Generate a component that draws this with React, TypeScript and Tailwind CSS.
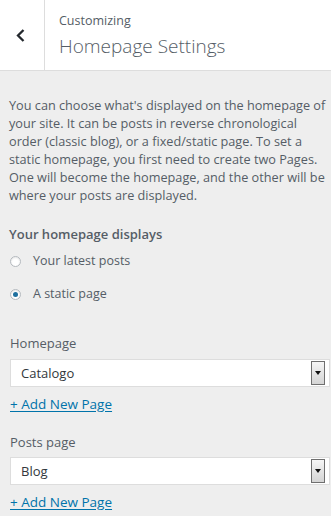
import React from 'react';

const font = { fontFamily: '"Open Sans", "Noto Sans", sans-serif' };

function ChevronLeft() {
  return (
    <svg width="9" height="13" viewBox="0 0 9 13" fill="none">
      <path d="M7.5 1 L2 6.5 L7.5 12" stroke="#23282d" strokeWidth="2.3" />
    </svg>
  );
}

function Radio({ checked, label }: { checked?: boolean; label: string }) {
  return (
    <label className="flex items-center h-[33px] text-[12.5px] text-[#555d66]">
      <span className="ml-[1px] w-[11px] h-[11px] rounded-full border border-[#b4b9be] bg-white flex items-center justify-center shadow-[inset_0_1px_2px_rgba(0,0,0,0.1)]">
        {checked && <span className="w-[5px] h-[5px] rounded-full bg-[#1e6f9e]" />}
      </span>
      <span className="ml-[12px]">{label}</span>
    </label>
  );
}

function Select({ value }: { value: string }) {
  return (
    <div className="flex h-[28px] bg-white border border-[#ddd]">
      <span className="flex-1 pl-[10px] text-[13px] leading-[26px] text-[#32373c]">{value}</span>
      <span className="w-[14px] my-[1px] mr-[4px] border border-[#6f6f6f] bg-gradient-to-b from-[#f6f6f6] to-[#d4d4d4] flex items-center justify-center">
        <svg width="6" height="4" viewBox="0 0 6 4">
          <path d="M0 0 H6 L3 4 Z" fill="#111" />
        </svg>
      </span>
    </div>
  );
}

function AddLink() {
  return (
    <a href="#" className="block mt-[7px] text-[13.5px] text-[#0073aa] underline underline-offset-2 leading-[20px]">
      + Add New Page
    </a>
  );
}

export default function App() {
  return (
    <div className="w-[331px] h-[516px] bg-[#eeeeee] overflow-hidden" style={font}>
      <div className="flex h-[71px] bg-white border-b border-[#ddd]">
        <div className="w-[45px] border-r border-[#ddd] flex items-center justify-center pr-[4px]">
          <ChevronLeft />
        </div>
        <div className="pl-[14px] pt-[12px] text-[#555d66]">
          <div className="text-[12.5px] leading-[18px]">Customizing</div>
          <div className="text-[19px] leading-[28px] mt-[2px] font-light">Homepage Settings</div>
        </div>
      </div>
      <div className="pl-[9px] pr-[1px] pt-[25px]">
        <p className="text-[12.7px] leading-[18px] text-[#555d66] whitespace-nowrap">
          You can choose what's displayed on the homepage of
          <br />
          your site. It can be posts in reverse chronological
          <br />
          order (classic blog), or a fixed/static page. To set a
          <br />
          static homepage, you first need to create two Pages.
          <br />
          One will become the homepage, and the other will be
          <br />
          where your posts are displayed.
        </p>
        <div className="mt-[20px] text-[13px] font-semibold text-[#555d66] leading-[20px]">Your homepage displays</div>
        <div className="mt-[1px]">
          <Radio label="Your latest posts" />
          <Radio checked label="A static page" />
        </div>
        <div className="mt-[22px] pl-[1px]">
          <div className="text-[13px] text-[#555d66] leading-[20px]">Homepage</div>
          <div className="mt-[6px]">
            <Select value="Catalogo" />
          </div>
          <AddLink />
        </div>
        <div className="mt-[18px] pl-[1px]">
          <div className="text-[13px] text-[#555d66] leading-[20px]">Posts page</div>
          <div className="mt-[5px]">
            <Select value="Blog" />
          </div>
          <AddLink />
        </div>
      </div>
    </div>
  );
}
